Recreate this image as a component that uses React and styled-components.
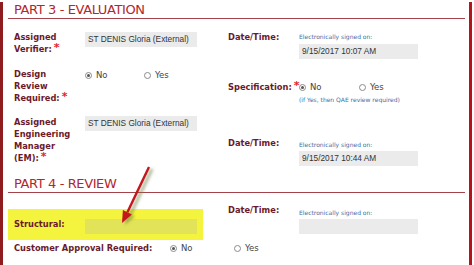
import React from "react";
import styled, { createGlobalStyle } from "styled-components";

const GlobalStyle = createGlobalStyle`
  html, body {
    margin: 0;
    padding: 0;
    background: #ffffff;
  }
`;

const Page = styled.div`
  position: relative;
  width: 474px;
  height: 265px;
  overflow: hidden;
  background: #fff;
`;

const Frame = styled.div`
  width: 472px;
  height: 265px;
  box-sizing: border-box;
  border-left: 3px solid #8e1b1e;
  border-right: 3px solid #b5141b;
  padding: 0 4px 0 5px;
  font-family: "DejaVu Sans", Verdana, sans-serif;
`;

const SectionTitle = styled.h2`
  margin: ${(p) => p.$top || 0}px 0 0;
  padding-left: 6px;
  height: 16px;
  line-height: 16px;
  font-size: 13px;
  font-weight: normal;
  letter-spacing: -0.4px;
  color: #b3262d;
  border-bottom: 1px solid #a4434a;
`;

const Row = styled.div`
  display: grid;
  grid-template-columns: 71px 143px 71px 1fr;
  align-items: start;
  padding-left: 6px;
  margin-top: ${(p) => p.$top || 0}px;
`;

const Label = styled.div`
  font-size: 8.3px;
  font-weight: bold;
  line-height: 12px;
  color: #6b1a2c;
  white-space: nowrap;
  margin-top: ${(p) => p.$top || 0}px;
`;

const Req = styled.span`
  color: #e0262b;
  font-size: 11px;
  line-height: 0;
  position: relative;
  top: -1px;
  margin-left: 2px;
`;

const Field = styled.div`
  width: ${(p) => p.$w || 112}px;
  height: 15px;
  box-sizing: border-box;
  margin-top: ${(p) => p.$top || 0}px;
  padding-left: 3px;
  background: ${(p) => (p.$hl ? "#e3e35a" : "#ebebeb")};
  font-family: "Liberation Sans", Arial, sans-serif;
  font-size: 8.3px;
  line-height: 15px;
  color: #333;
`;

const Cell = styled.div`
  margin-top: ${(p) => p.$top || 0}px;
`;

const Note = styled.div`
  font-size: 6px;
  line-height: 8px;
  color: #3d6fa6;
  white-space: nowrap;
  margin-top: ${(p) => p.$top || 0}px;
`;

const RadioGroup = styled.div`
  display: flex;
  margin-top: ${(p) => p.$top || 0}px;
`;

const Option = styled.label`
  display: flex;
  align-items: center;
  gap: 4px;
  width: ${(p) => p.$w || 59}px;
  height: 12px;
  font-size: 8.5px;
  color: #444;
`;

const Dot = styled.span`
  width: 7px;
  height: 7px;
  box-sizing: border-box;
  border-radius: 50%;
  border: 1px solid #8a8a8a;
  background: #fff;
  display: flex;
  align-items: center;
  justify-content: center;
  &::after {
    content: "";
    width: 3px;
    height: 3px;
    border-radius: 50%;
    background: ${(p) => (p.$on ? "#555" : "transparent")};
  }
`;

const Highlight = styled.div`
  grid-column: 1 / 3;
  margin: 5px 0 0 -6px;
  padding: 10px 0 0 6px;
  width: 195px;
  height: 31px;
  box-sizing: border-box;
  background: #f4f43e;
  display: grid;
  grid-template-columns: 71px 112px;
  align-items: start;
`;

const InlineRow = styled.div`
  display: flex;
  align-items: center;
  padding-left: 6px;
  margin-top: ${(p) => p.$top || 0}px;
`;

const WideLabel = styled(Label)`
  width: 156px;
`;

const Arrow = styled.svg`
  position: absolute;
  left: 112px;
  top: 160px;
  pointer-events: none;
`;

function Radios({ value, top, w }) {
  return (
    <RadioGroup $top={top}>
      <Option $w={w}>
        <Dot $on={value === "No"} />
        No
      </Option>
      <Option $w={w}>
        <Dot $on={value === "Yes"} />
        Yes
      </Option>
    </RadioGroup>
  );
}

export default function App() {
  return (
    <Page>
      <GlobalStyle />
      <Frame>
        <SectionTitle $top={2}>PART 3 - EVALUATION</SectionTitle>

        <Row $top={12}>
          <Label>
            Assigned
            <br />
            Verifier:<Req>*</Req>
          </Label>
          <Field $top={1}>ST DENIS Gloria (External)</Field>
          <Label>Date/Time:</Label>
          <Cell>
            <Note $top={2}>Electronically signed on:</Note>
            <Field $w={119} $top={3}>9/15/2017 10:07 AM</Field>
          </Cell>
        </Row>

        <Row $top={9}>
          <Label>
            Design
            <br />
            Review
            <br />
            Required:<Req>*</Req>
          </Label>
          <Radios value="No" top={1} />
          <Label $top={13}>
            Specification:<Req>*</Req>
          </Label>
          <Cell $top={13}>
            <Radios value="No" w={60} />
            <Note $top={3}>(if Yes, then QAE review required)</Note>
          </Cell>
        </Row>

        <Row $top={12}>
          <Label>
            Assigned
            <br />
            Engineering
            <br />
            Manager
            <br />
            (EM):<Req>*</Req>
          </Label>
          <Field>ST DENIS Gloria (External)</Field>
          <Label $top={21}>Date/Time:</Label>
          <Cell $top={25}>
            <Note>Electronically signed on:</Note>
            <Field $w={119} $top={2}>9/15/2017 10:44 AM</Field>
          </Cell>
        </Row>

        <SectionTitle $top={10}>PART 4 - REVIEW</SectionTitle>

        <Row $top={11}>
          <Highlight>
            <Label $top={-1}>Structural:</Label>
            <Field $hl />
          </Highlight>
          <Label>Date/Time:</Label>
          <Cell>
            <Note $top={5}>Electronically signed on:</Note>
            <Field $w={119} $top={2} />
          </Cell>
        </Row>

        <InlineRow $top={2}>
          <WideLabel>Customer Approval Required:</WideLabel>
          <Radios value="No" w={64} />
        </InlineRow>
      </Frame>

      <Arrow width="45" height="70" viewBox="0 0 45 70">
        <defs>
          <filter id="blur" x="-50%" y="-50%" width="200%" height="200%">
            <feGaussianBlur stdDeviation="1.6" />
          </filter>
        </defs>
        <g transform="translate(3 2)" opacity="0.55" filter="url(#blur)">
          <line x1="37" y1="7" x2="15.4" y2="52.3" stroke="#6f7d3c" strokeWidth="3" />
          <polygon points="10,63 19.9,54.6 10.9,50" fill="#6f7d3c" />
        </g>
        <line x1="37" y1="7" x2="15.4" y2="52.3" stroke="#c3161d" strokeWidth="2.4" />
        <polygon points="10,63 19.9,54.6 10.9,50" fill="#c3161d" />
      </Arrow>
    </Page>
  );
}
